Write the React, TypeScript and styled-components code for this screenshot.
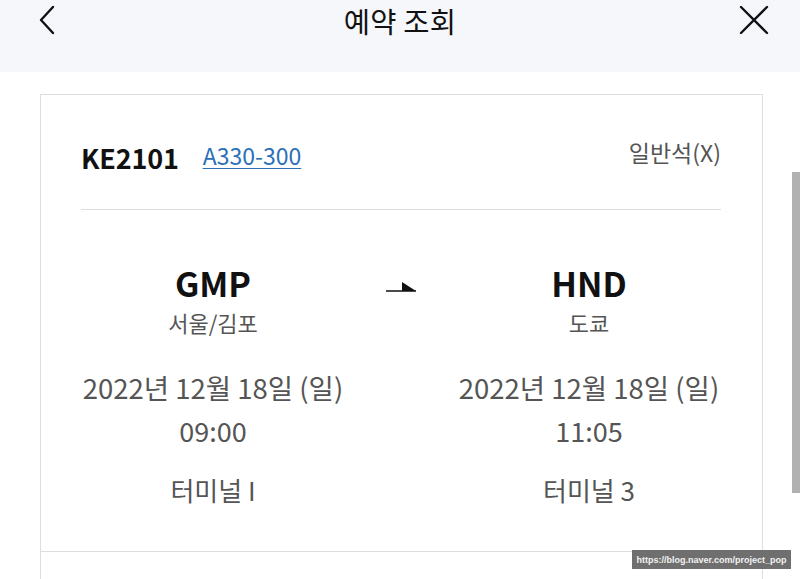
import React from "react";
import styled, { createGlobalStyle } from "styled-components";

const Global = createGlobalStyle`
  html, body { margin: 0; padding: 0; height: 100%; overflow: hidden; background: #fff; }
  body { font-family: "Noto Sans CJK KR", "Noto Sans", sans-serif; color: #111; }
  * { box-sizing: border-box; }
`;

const Page = styled.div`
  position: relative;
  width: 800px;
  height: 579px;
  overflow: hidden;
  background: #fff;
`;

const Header = styled.header`
  height: 72px;
  background: #f6f7fb;
  display: grid;
  grid-template-columns: 80px 1fr 80px;
  align-items: start;
`;

const HeaderRow = styled.div<{ $align: string }>`
  height: 41px;
  display: flex;
  align-items: center;
  justify-content: ${(p) => p.$align};
`;

const Title = styled.h1`
  margin: 0;
  font-size: 28.5px;
  font-weight: 400;
  color: #111;
  line-height: normal;
  text-align: center;
  letter-spacing: 0.2px;
`;

const IconBtn = styled.span`
  display: inline-flex;
  width: 30px;
  height: 30px;
  align-items: center;
  justify-content: center;
  margin-top: -2px;
`;

const Body = styled.main`
  padding: 22px 37px 0 40px;
`;

const Card = styled.section`
  border: 1px solid #dedede;
  border-bottom: none;
  height: 600px;
`;

const FlightSection = styled.div`
  padding: 0 41px 0 40px;
  border-bottom: 1px solid #dedede;
  height: 457px;
`;

const FlightHead = styled.div`
  display: flex;
  align-items: center;
  height: 115px;
  padding-top: 10px;
  border-bottom: 1px solid #dedede;
`;

const FlightNo = styled.span`
  font-size: 27px;
  font-weight: 700;
  color: #111;
  letter-spacing: -0.2px;
`;

const Aircraft = styled.a`
  margin-left: 24px;
  font-size: 23px;
  color: #2b70b8;
  text-decoration: underline;
  text-underline-offset: 3px;
  text-decoration-thickness: 1px;
  margin-top: -4px;
`;

const Cabin = styled.span`
  margin-left: auto;
  font-size: 23px;
  color: #555;
  margin-top: -10px;
`;

const Route = styled.div`
  display: grid;
  grid-template-columns: 264px 1fr 264px;
  padding-top: 51px;
`;

const Port = styled.div`
  display: flex;
  flex-direction: column;
  align-items: center;
  color: #555;
`;

const Code = styled.div`
  font-size: 34px;
  font-weight: 700;
  color: #111;
  line-height: 44px;
`;

const City = styled.div`
  font-size: 22px;
  line-height: 32px;
  margin-top: 1px;
`;

const DateLine = styled.div`
  font-size: 27.5px;
  line-height: 46px;
  margin-top: 26px;
  white-space: nowrap;
`;

const TimeLine = styled.div`
  font-size: 27px;
  line-height: 42px;
`;

const Terminal = styled.div`
  font-size: 26px;
  line-height: 42px;
  margin-top: 17px;
`;

const ArrowCell = styled.div`
  display: flex;
  justify-content: center;
  padding-top: 20px;
`;

const Scrollbar = styled.div`
  position: absolute;
  right: 0;
  top: 172px;
  width: 8px;
  height: 321px;
  background: #b1b1b1;
`;

const Watermark = styled.div`
  position: absolute;
  left: 632px;
  top: 550px;
  width: 159px;
  height: 19px;
  background: #6f6f6f;
  color: #f2f2f2;
  font-family: "Liberation Sans", Arial, sans-serif;
  font-size: 9px;
  font-weight: 700;
  display: flex;
  align-items: center;
  justify-content: center;
`;

type PortProps = { code: string; city: string; date: string; time: string; terminal: string };

const Airport = ({ code, city, date, time, terminal }: PortProps) => (
  <Port>
    <Code>{code}</Code>
    <City>{city}</City>
    <DateLine>{date}</DateLine>
    <TimeLine>{time}</TimeLine>
    <Terminal>{terminal}</Terminal>
  </Port>
);

export default function App() {
  return (
    <Page>
      <Global />
      <Header>
        <HeaderRow $align="flex-start" style={{ paddingLeft: 33 }}>
          <IconBtn>
            <svg width="30" height="30" viewBox="0 0 30 30">
              <polyline points="20,2 8,15 20,28" fill="none" stroke="#111" strokeWidth="2.4" strokeLinecap="round" strokeLinejoin="round" />
            </svg>
          </IconBtn>
        </HeaderRow>
        <HeaderRow $align="center">
          <Title>예약 조회</Title>
        </HeaderRow>
        <HeaderRow $align="flex-end" style={{ paddingRight: 31 }}>
          <IconBtn>
            <svg width="30" height="30" viewBox="0 0 30 30">
              <path d="M2 2 L28 28 M28 2 L2 28" fill="none" stroke="#111" strokeWidth="2.4" strokeLinecap="round" />
            </svg>
          </IconBtn>
        </HeaderRow>
      </Header>
      <Body>
        <Card>
          <FlightSection>
            <FlightHead>
              <FlightNo>KE2101</FlightNo>
              <Aircraft href="#">A330-300</Aircraft>
              <Cabin>일반석(X)</Cabin>
            </FlightHead>
            <Route>
              <Airport code="GMP" city="서울/김포" date="2022년 12월 18일 (일)" time="09:00" terminal="터미널 I" />
              <ArrowCell>
                <svg width="30" height="12" viewBox="0 0 30 12">
                  <line x1="0" y1="10" x2="30" y2="10" stroke="#111" strokeWidth="1.5" />
                  <polygon points="16,1 30,10 16,10" fill="#111" />
                </svg>
              </ArrowCell>
              <Airport code="HND" city="도쿄" date="2022년 12월 18일 (일)" time="11:05" terminal="터미널 3" />
            </Route>
          </FlightSection>
        </Card>
      </Body>
      <Scrollbar />
      <Watermark>https://blog.naver.com/project_pop</Watermark>
    </Page>
  );
}
